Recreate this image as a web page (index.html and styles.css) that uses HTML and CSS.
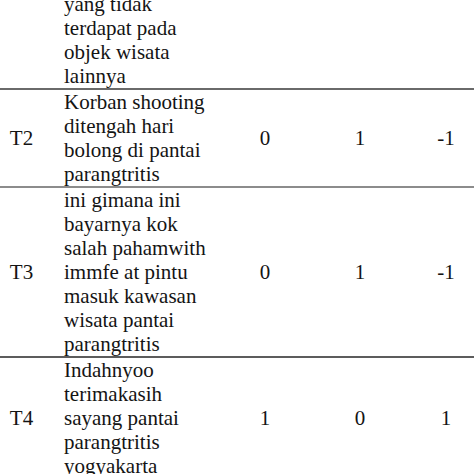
FILE: index.html
```html
<!DOCTYPE html>
<html lang="id">
<head>
<meta charset="utf-8">
<title>Tabel sentimen</title>
<link rel="stylesheet" href="styles.css">
</head>
<body>
<div class="table">
  <div class="row row-1">
    <div class="cell label"></div>
    <div class="cell text">yang tidak terdapat pada objek wisata lainnya</div>
    <div class="cell num"></div>
    <div class="cell num"></div>
    <div class="cell num"></div>
  </div>
  <div class="row row-2">
    <div class="cell label">T2</div>
    <div class="cell text">Korban shooting ditengah hari bolong di pantai parangtritis</div>
    <div class="cell num">0</div>
    <div class="cell num">1</div>
    <div class="cell num">-1</div>
  </div>
  <div class="row row-3">
    <div class="cell label">T3</div>
    <div class="cell text">ini gimana ini bayarnya kok salah pahamwith immfe at pintu masuk kawasan wisata pantai parangtritis</div>
    <div class="cell num">0</div>
    <div class="cell num">1</div>
    <div class="cell num">-1</div>
  </div>
  <div class="row row-4">
    <div class="cell label">T4</div>
    <div class="cell text">Indahnyoo terimakasih sayang pantai parangtritis yogyakarta</div>
    <div class="cell num">1</div>
    <div class="cell num">0</div>
    <div class="cell num">1</div>
  </div>
</div>
</body>
</html>
```

FILE: styles.css
```css
html, body {
  margin: 0;
  padding: 0;
  background: #ffffff;
}

body {
  width: 474px;
  height: 474px;
  overflow: hidden;
  font-family: "Liberation Serif", "Times New Roman", serif;
  font-size: 21px;
  line-height: 24px;
  color: #141414;
}

.table {
  margin-top: -8px;
  width: 474px;
}

.row {
  display: grid;
  grid-template-columns: 43px 185px 74px 116px 56px;
  align-items: center;
  border-bottom: 2px solid #6a6a6a;
}

.row-2 {
  border-bottom-color: #8c8c8c;
}

.row-3 {
  border-bottom-color: #5c5c5c;
}

.row-4 {
  border-bottom: none;
}

.cell {
  padding: 0;
}

.label,
.num {
  text-align: center;
}

.text {
  padding: 0 14px 0 21px;
  align-self: start;
}
```
